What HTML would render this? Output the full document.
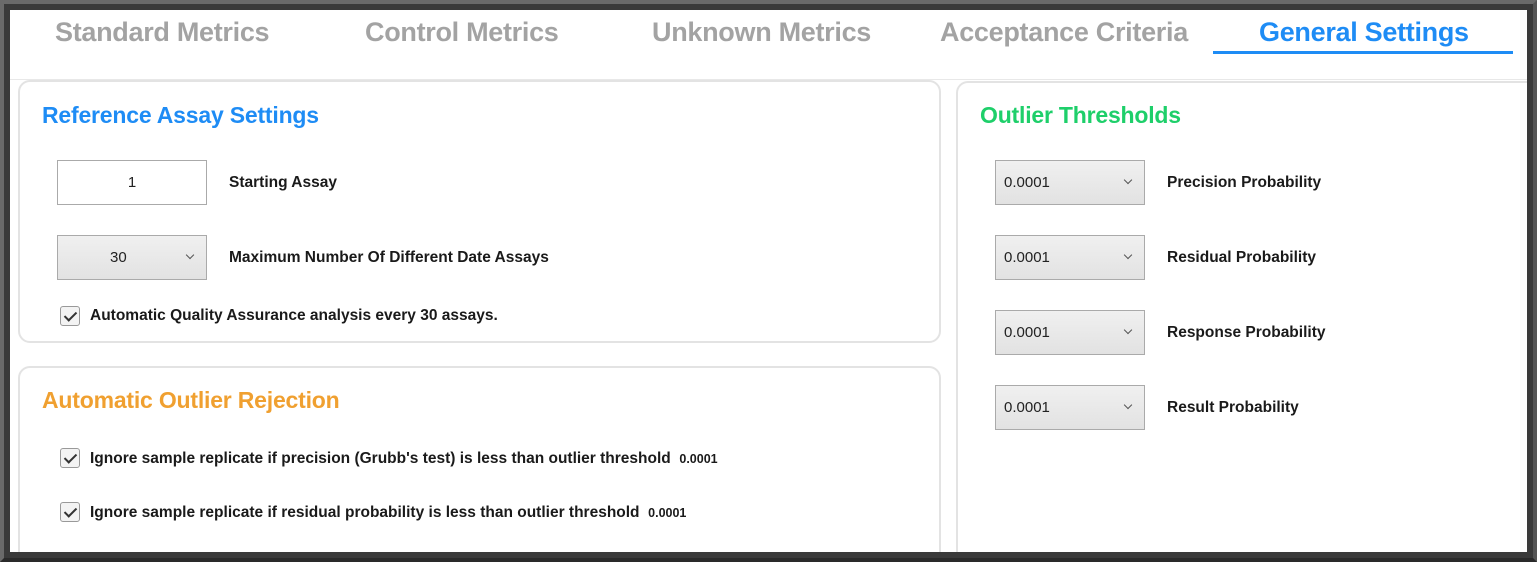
<!DOCTYPE html>
<html><head><style>
*{box-sizing:border-box;margin:0;padding:0}
body{width:1537px;height:562px;background:#3a3a3a;font-family:"Liberation Sans",sans-serif;position:relative;overflow:hidden}
.frame{position:absolute;left:0;top:0;width:1537px;height:562px;border-top:4px solid #6a6a6a;border-left:4px solid #6a6a6a;border-right:4px solid #555;border-bottom:4px solid #2a2a2a}
.page{position:absolute;left:10px;top:10px;width:1517px;height:542px;background:#fff;overflow:hidden}
.tab{position:absolute;top:7px;font-size:27px;font-weight:bold;color:#a3a3a3;letter-spacing:-0.3px}
.tab.act{color:#1e8cf5}
.ul{position:absolute;left:1203px;top:41px;width:300px;height:3px;background:#1e8cf5}
.sep{position:absolute;left:0;top:69px;width:1517px;height:1px;background:#e8e8e8}
.card{position:absolute;border:2px solid #e3e3e3;border-radius:12px;background:#fff}
h2{position:absolute;font-size:23px;font-weight:bold;letter-spacing:-0.2px}
.box{position:absolute;width:150px;height:45px;border:1px solid #aaa;font-size:15px;color:#222;display:flex;align-items:center}
.sel{background:linear-gradient(#f0f0f0,#e2e2e2)}
.chev{position:absolute;right:13px;top:16px;width:6px;height:6px;border-right:1.5px solid #555;border-bottom:1.5px solid #555;transform:rotate(45deg)}
.lbl{position:absolute;font-size:15.5px;font-weight:bold;color:#1a1a1a}
.cb{position:absolute;width:20px;height:20px;border:1px solid #999;border-radius:3px;background:#f3f3f3}
.cb:after{content:"";position:absolute;left:6px;top:2px;width:5px;height:10px;border-right:2.5px solid #333;border-bottom:2.5px solid #333;transform:rotate(45deg)}
.sm{font-size:12.5px}
</style></head><body>
<div class="frame"></div>
<div class="page">
<div class="tab" style="left:45px">Standard Metrics</div>
<div class="tab" style="left:355px">Control Metrics</div>
<div class="tab" style="left:642px">Unknown Metrics</div>
<div class="tab" style="left:930px">Acceptance Criteria</div>
<div class="tab act" style="left:1249px">General Settings</div>
<div class="ul"></div>
<div class="sep"></div>

<div class="card" style="left:8px;top:70px;width:923px;height:263px"></div>
<h2 style="left:32px;top:92px;color:#1e8cf5">Reference Assay Settings</h2>
<div class="box" style="left:47px;top:150px;justify-content:center;padding-right:0">1</div>
<div class="lbl" style="left:219px;top:164px">Starting Assay</div>
<div class="box sel" style="left:47px;top:225px;padding-left:52px">30<div class="chev"></div></div>
<div class="lbl" style="left:219px;top:239px">Maximum Number Of Different Date Assays</div>
<div class="cb" style="left:50px;top:296px"></div>
<div class="lbl" style="left:80px;top:297px">Automatic Quality Assurance analysis every 30 assays.</div>

<div class="card" style="left:8px;top:356px;width:923px;height:220px"></div>
<h2 style="left:32px;top:377px;color:#f0a030">Automatic Outlier Rejection</h2>
<div class="cb" style="left:50px;top:438px"></div>
<div class="lbl" style="left:80px;top:440px">Ignore sample replicate if precision (Grubb's test) is less than outlier threshold &nbsp;<span class="sm">0.0001</span></div>
<div class="cb" style="left:50px;top:492px"></div>
<div class="lbl" style="left:80px;top:494px">Ignore sample replicate if residual probability is less than outlier threshold &nbsp;<span class="sm">0.0001</span></div>

<div class="card" style="left:946px;top:71px;width:600px;height:500px"></div>
<h2 style="left:970px;top:92px;color:#1ecf6a">Outlier Thresholds</h2>
<div class="box sel" style="left:985px;top:150px;padding-left:8px">0.0001<div class="chev"></div></div>
<div class="lbl" style="left:1157px;top:164px">Precision Probability</div>
<div class="box sel" style="left:985px;top:225px;padding-left:8px">0.0001<div class="chev"></div></div>
<div class="lbl" style="left:1157px;top:239px">Residual Probability</div>
<div class="box sel" style="left:985px;top:300px;padding-left:8px">0.0001<div class="chev"></div></div>
<div class="lbl" style="left:1157px;top:314px">Response Probability</div>
<div class="box sel" style="left:985px;top:375px;padding-left:8px">0.0001<div class="chev"></div></div>
<div class="lbl" style="left:1157px;top:389px">Result Probability</div>
</div>
</body></html>
